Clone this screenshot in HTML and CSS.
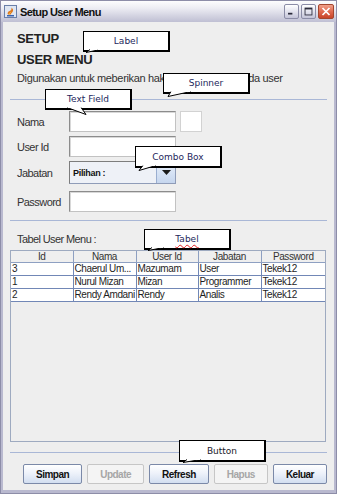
FILE: index.html
```html
<!DOCTYPE html>
<html>
<head>
<meta charset="utf-8">
<title>Setup User Menu</title>
<link rel="stylesheet" href="styles.css">
</head>
<body>
<div class="window">
  <div class="titlebar">
    <svg class="appicon" width="13" height="13" viewBox="0 0 13 13">
      <rect x="0.5" y="0.5" width="12" height="12" fill="#dfe6f2" stroke="#6a7fa8"/>
      <path d="M3 10 h7 v1.5 h-7z" fill="#3a63b0"/>
      <path d="M4 9.5 c-1-1.5 0-3 1.5-3.5 c1.5-.5 2.5-1.8 1.8-3.5 c1.8 1 2.4 3 1.2 4.5 c-.8 1-1.6 1.5-1.6 2.5z" fill="#e07a20"/>
      <path d="M5.5 9.5 c-.4-1 .4-1.8 1.2-2.2" fill="none" stroke="#f6c040" stroke-width="1"/>
    </svg>
    <span class="title">Setup User Menu</span>
    <div class="controls">
      <span class="ctl"><svg width="15" height="15" viewBox="0 0 15 15"><rect x="3.5" y="9" width="5" height="2" fill="#2a2a3a"/></svg></span>
      <span class="ctl"><svg width="15" height="15" viewBox="0 0 15 15"><rect x="3.5" y="3.5" width="8" height="8" fill="none" stroke="#2a2a3a"/><rect x="3.5" y="3.5" width="8" height="1.6" fill="#2a2a3a"/></svg></span>
      <span class="ctl close"><svg width="16" height="15" viewBox="0 0 16 15"><path d="M4 3.5 L12 11.5 M12 3.5 L4 11.5" stroke="#fff" stroke-width="2"/></svg></span>
    </div>
  </div>

  <div class="content">
    <div class="heading">SETUP<br>USER MENU</div>
    <div class="desc">Digunakan untuk meberikan hak akses menu kepada user</div>
    <div class="sep sep-top"></div>

    <div class="form">
      <div class="row">
        <span class="lbl">Nama</span>
        <div class="field"></div>
        <div class="spin"></div>
      </div>
      <div class="row">
        <span class="lbl">User Id</span>
        <div class="field"></div>
      </div>
      <div class="row row-combo">
        <span class="lbl">Jabatan</span>
        <div class="combo">
          <span class="combo-text">Pilihan :</span>
          <span class="combo-btn"><svg width="9" height="5" viewBox="0 0 9 5"><path d="M0 0 H9 L4.5 5z" fill="#1a1a1a"/></svg></span>
        </div>
      </div>
      <div class="row row-pw">
        <span class="lbl">Password</span>
        <div class="field"></div>
      </div>
    </div>

    <div class="sep sep-mid"></div>
    <div class="tbl-label">Tabel User Menu :</div>

    <div class="scroll">
      <table class="grid">
        <colgroup>
          <col class="c1"><col class="c2"><col class="c3"><col class="c4"><col>
        </colgroup>
        <thead>
          <tr><th>Id</th><th>Nama</th><th>User Id</th><th>Jabatan</th><th>Password</th></tr>
        </thead>
        <tbody>
          <tr><td>3</td><td>Chaerul Um...</td><td>Mazumam</td><td>User</td><td>Tekek12</td></tr>
          <tr><td>1</td><td>Nurul Mizan</td><td>Mizan</td><td>Programmer</td><td>Tekek12</td></tr>
          <tr><td>2</td><td>Rendy Amdani</td><td>Rendy</td><td>Analis</td><td>Tekek12</td></tr>
        </tbody>
      </table>
    </div>

    <div class="sep sep-bottom"></div>

    <div class="buttons">
      <button class="btn">Simpan</button>
      <button class="btn" disabled>Update</button>
      <button class="btn">Refresh</button>
      <button class="btn" disabled>Hapus</button>
      <button class="btn">Keluar</button>
    </div>
  </div>

  <div class="callout co-label">Label<svg class="tail" width="30" height="8" viewBox="0 0 30 8"><path d="M7 0.5 L3 3.5 L15 1" fill="#fff" stroke="#000"/><rect x="7.5" y="-1" width="7" height="2" fill="#fff"/></svg></div>
  <div class="callout co-spinner">Spinner<svg class="tail" width="30" height="8" viewBox="0 0 30 8"><path d="M8 0.5 L5 5.5 L28 0.5" fill="#fff" stroke="#000"/><rect x="8.5" y="-1" width="19" height="2" fill="#fff"/></svg></div>
  <div class="callout co-text">Text Field<svg class="tail tail-right" width="50" height="10" viewBox="0 0 50 10"><path d="M22 0.5 L41 7.5 L36 0.5" fill="#fff" stroke="#000"/><rect x="22.5" y="-1" width="13" height="2" fill="#fff"/></svg></div>
  <div class="callout co-combo">Combo Box<svg class="tail" width="30" height="8" viewBox="0 0 30 8"><path d="M8 0.5 L4 5.5 L21 0.5" fill="#fff" stroke="#000"/><rect x="8.5" y="-1" width="12" height="2" fill="#fff"/></svg></div>
  <div class="callout co-tabel"><span class="spell">Tabel</span><svg class="tail" width="30" height="8" viewBox="0 0 30 8"><path d="M8 0.5 L4 3.5 L20 0.5" fill="#fff" stroke="#000"/><rect x="8.5" y="-1" width="11" height="2" fill="#fff"/></svg></div>
  <div class="callout co-button">Button<svg class="tail" width="30" height="8" viewBox="0 0 30 8"><path d="M8 0.5 L4 3.5 L22 0.5" fill="#fff" stroke="#000"/><rect x="8.5" y="-1" width="13" height="2" fill="#fff"/></svg></div>
</div>
</body>
</html>
```

FILE: styles.css
```css
html, body {
  margin: 0;
  padding: 0;
  background: #ffffff;
}

.window {
  position: relative;
  width: 337px;
  height: 494px;
  box-sizing: border-box;
  background: #b9b9cf;
  border: 1px solid #8d8da8;
  display: flex;
  flex-direction: column;
  font-family: "Liberation Sans", Arial, sans-serif;
  color: #2b2b2b;
  overflow: hidden;
}

/* ---------- title bar ---------- */
.titlebar {
  height: 21px;
  flex: none;
  display: flex;
  align-items: center;
  padding-left: 3px;
  background: linear-gradient(#fdfdfe 0%, #ececf3 35%, #d7d7e4 65%, #bfbfd3 100%);
}

.appicon {
  flex: none;
  margin-right: 3px;
}

.title {
  font-weight: bold;
  font-size: 11px;
  letter-spacing: -0.6px;
  color: #111;
}

.controls {
  margin-left: auto;
  display: flex;
  gap: 2px;
  padding-right: 2px;
}

.ctl {
  width: 15px;
  height: 15px;
  box-sizing: border-box;
  border: 1px solid #8b8ca6;
  border-radius: 2px;
  background: linear-gradient(#ffffff, #e3e3ee 50%, #c4c4d8);
  display: flex;
  align-items: center;
  justify-content: center;
  overflow: hidden;
}

.ctl svg {
  display: block;
}

.ctl.close {
  width: 16px;
  border-color: #a4462e;
  background: linear-gradient(#f0a08a, #e06a50 50%, #c84428);
}

/* ---------- content ---------- */
.content {
  flex: 1;
  margin: 0 2px 3px 2px;
  background: #eeeeee;
  display: flex;
  flex-direction: column;
  padding: 0 0 0 14px;
}

.heading {
  margin-top: 6px;
  font-weight: bold;
  font-size: 13px;
  line-height: 21px;
  letter-spacing: -0.3px;
  color: #222;
}

.desc {
  margin-top: 2px;
  font-size: 11px;
  line-height: 13px;
  letter-spacing: -0.35px;
  white-space: nowrap;
  color: #333;
}

.sep {
  height: 1px;
  background: #a9b7d6;
  margin-left: -7px;
  margin-right: 7px;
}

.sep-top { margin-top: 14px; }
.sep-mid { margin-top: 8px; }
.sep-bottom { margin-top: 10px; }

/* ---------- form ---------- */
.form {
  margin-top: 11px;
  display: flex;
  flex-direction: column;
}

.row {
  display: flex;
  align-items: center;
  height: 21px;
}

.row + .row { margin-top: 4px; }
.row-combo { height: 23px; }
.form .row-pw { margin-top: 7px; }

.lbl {
  width: 52px;
  flex: none;
  font-size: 11px;
  letter-spacing: -0.55px;
  color: #333;
}

.field {
  width: 107px;
  height: 21px;
  box-sizing: border-box;
  background: #fff;
  border: 1px solid #c2c2c2;
  border-top-color: #8c8c8c;
  border-left-color: #8c8c8c;
  box-shadow: inset 1px 1px 0 #d8d8d8;
}

.spin {
  width: 22px;
  height: 21px;
  margin-left: 4px;
  box-sizing: border-box;
  background: #fff;
  border: 1px solid #d2d2d2;
}

.combo {
  width: 107px;
  height: 23px;
  box-sizing: border-box;
  border: 1px solid #8f9cb8;
  border-top-color: #7d7d7d;
  border-left-color: #7d7d7d;
  background: #eef1f7;
  display: flex;
  align-items: stretch;
}

.combo-text {
  flex: 1;
  display: flex;
  align-items: center;
  padding-left: 3px;
  font-weight: bold;
  font-size: 9px;
  letter-spacing: -0.3px;
  color: #111;
}

.combo-btn {
  width: 18px;
  border-left: 1px solid #9aaed0;
  background: linear-gradient(#e8f0fb, #c6d6ee);
  display: flex;
  align-items: center;
  justify-content: center;
}

.combo-btn svg { display: block; }

/* ---------- table ---------- */
.tbl-label {
  margin-top: 12px;
  font-size: 11px;
  line-height: 13px;
  letter-spacing: -0.6px;
  color: #333;
}

.scroll {
  margin: 4px 8px 0 -7px;
  height: 192px;
  box-sizing: border-box;
  border: 1px solid #9eaac0;
  background: #eeeeee;
}

.grid {
  width: 100%;
  border-collapse: collapse;
  table-layout: fixed;
  font-size: 10px;
  letter-spacing: -0.4px;
  color: #1e1e1e;
}

.grid col.c1 { width: 62px; }
.grid col.c2 { width: 63px; }
.grid col.c3 { width: 62px; }
.grid col.c4 { width: 63px; }

.grid th {
  height: 11px;
  line-height: 11px;
  padding: 0;
  font-weight: normal;
  background: #efefef;
  border: 1px solid #8ea0c2;
  border-top: none;
  color: #333;
  text-align: center;
}

.grid td {
  height: 12px;
  line-height: 12px;
  padding: 0 0 0 1px;
  background: #fff;
  border: 1px solid #7187b6;
  white-space: nowrap;
  overflow: hidden;
}

.grid tr > *:first-child { border-left: none; }
.grid tr > *:last-child { border-right: none; }

/* ---------- buttons ---------- */
.buttons {
  margin-top: 11px;
  display: flex;
  justify-content: flex-end;
  gap: 5px;
  padding-right: 7px;
}

.btn {
  height: 20px;
  padding: 0 12px;
  margin: 0;
  border: 1px solid #7b89a8;
  border-radius: 2px;
  background: linear-gradient(#ffffff 0%, #eef2fa 45%, #d2def0 100%);
  font-family: "Liberation Sans", Arial, sans-serif;
  font-weight: bold;
  font-size: 10px;
  letter-spacing: -0.5px;
  color: #111;
}

.btn:disabled {
  border-color: #c6c6c6;
  background: #f4f4f4;
  color: #a6a6a6;
}

/* ---------- annotation callouts ---------- */
.callout {
  position: absolute;
  box-sizing: border-box;
  width: 87px;
  height: 21px;
  background: #fff;
  border: 1px solid #000;
  border-right-width: 2px;
  border-bottom-width: 2px;
  font-family: "DejaVu Sans", Verdana, sans-serif;
  font-size: 9px;
  color: #241f5c;
  display: flex;
  align-items: center;
  justify-content: center;
}

.tail {
  position: absolute;
  left: -1px;
  top: 100%;
  margin-top: -1px;
  overflow: visible;
}

.co-label { left: 82px; top: 30px; }
.co-spinner { left: 162px; top: 72px; }
.co-text { left: 44px; top: 88px; }
.co-combo { left: 134px; top: 145px; height: 22px; }
.co-tabel { left: 143px; top: 228px; }
.co-button { left: 178px; top: 439px; height: 22px; color: #1a1a2a; }

.spell {
  text-decoration: underline wavy #e02020;
  text-decoration-thickness: 1px;
  text-underline-offset: 2px;
}
```
